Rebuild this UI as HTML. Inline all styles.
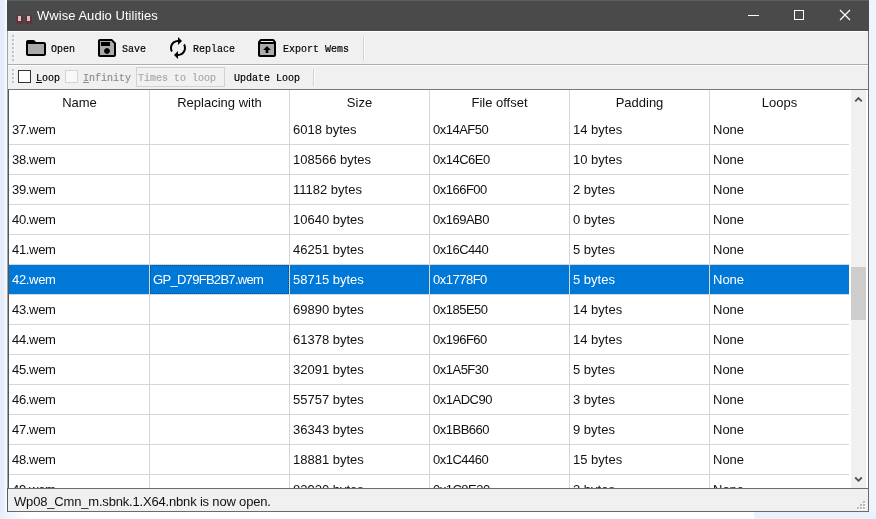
<!DOCTYPE html>
<html>
<head>
<meta charset="utf-8">
<title>Wwise Audio Utilities</title>
<style>
html,body{margin:0;padding:0;}
body{width:876px;height:519px;position:relative;overflow:hidden;background:#ffffff;font-family:"Liberation Sans",sans-serif;}
.abs{position:absolute;}
#deskL{left:0;top:0;width:8px;height:512px;background:linear-gradient(90deg,#e4ecfb 0,#e6eefc 4px,#f2f6fe 5px,#f6f9ff 7px);}
#deskR{left:869px;top:0;width:7px;height:512px;background:#eef3fe;}
#deskBR{left:754px;top:512px;width:122px;height:7px;background:#e8f1fc;}
#deskBL{left:0;top:512px;width:30px;height:7px;background:linear-gradient(90deg,#e4effc 0,#eef4fd 8px,#ffffff 28px);}
#win{will-change:transform;left:7px;top:0;width:862px;height:512px;background:#f0f0f0;}
#title{left:0;top:0;width:862px;height:31px;background:#4a4a4a;border-top:1px solid #5e5e5e;box-sizing:border-box;}
#title .t{left:30px;top:7px;letter-spacing:0.04px;font-size:13px;color:#ffffff;white-space:nowrap;line-height:16px;}
.mono{font-family:"Liberation Mono",monospace;font-size:11.8px;white-space:nowrap;line-height:14px;color:#000;-webkit-text-stroke:0.2px currentColor;transform:scaleX(0.8473);transform-origin:0 0;}
#tb1{left:0;top:31px;width:862px;height:33px;background:#f0f0f0;border-top:1px solid #fff;box-sizing:border-box;}
#sepA{left:0;top:64px;width:862px;height:1px;background:#adadad;}
#sepB{left:0;top:65px;width:862px;height:1px;background:#ffffff;}
#tb2{left:0;top:66px;width:862px;height:23px;background:#f0f0f0;}
.grip{width:2px;background-image:repeating-linear-gradient(180deg,#c2c2c2 0,#c2c2c2 2px,transparent 2px,transparent 4px);border-right:1px solid #fafafa;}
.vsep{width:1px;background:#d2d2d2;border-right:1px solid #fbfbfb;}
.cb{width:13px;height:13px;box-sizing:border-box;border:1px solid #333;background:#fff;}
.cb.dis{border-color:#d4d4d4;background:#f8f8f8;}
#inp{left:129px;top:67px;width:89px;height:20px;box-sizing:border-box;border:1px solid #d2d2d2;background:#f1f1f1;}
#table{left:1px;top:89px;width:860px;height:399px;background:#fff;border-top:1px solid #787878;border-left:1px solid #555;box-sizing:border-box;overflow:hidden;}
.col{top:0;width:1px;height:398px;background:#d6d6d6;}
.row{left:0;width:840px;height:1px;background:#d6d6d6;}
.hd{top:5px;width:139px;text-align:center;font-size:13px;line-height:16px;color:#111;}
.c{font-size:13px;line-height:16px;color:#111;white-space:nowrap;}
#sel{left:0;top:175px;width:840px;height:30px;background:#0078d7;}
#status{left:1px;top:488px;width:860px;height:23px;background:#f0f0f0;border-top:1px solid #6c6c6c;box-sizing:border-box;}
#status .t{left:6px;top:5px;letter-spacing:-0.18px;font-size:13px;line-height:16px;color:#111;white-space:nowrap;}
#sb{left:842px;top:0;width:15px;height:398px;background:#f0f0f0;}
#thumb{left:842px;top:177px;width:15px;height:53px;background:#cdcdcd;}
</style>
</head>
<body>
<div id="deskL" class="abs"></div>
<div id="deskR" class="abs"></div>
<div id="deskBR" class="abs"></div>
<div id="deskBL" class="abs"></div>
<div id="win" class="abs">
  <div id="title" class="abs">
    <svg class="abs" style="left:9px;top:7px" width="16" height="16" viewBox="0 0 16 16"><rect x="0.500" y="7.500" width="6.500" height="8.500" fill="#6a2634" opacity=".6"/><rect x="9.500" y="7.500" width="6.500" height="8.500" fill="#6a2634" opacity=".6"/><rect x="2" y="8" width="3" height="5" fill="#e6bcc0"/><rect x="11" y="8" width="3" height="5" fill="#e6bcc0"/></svg>
    <div class="abs t">Wwise Audio Utilities</div>
    <svg class="abs" style="left:736px;top:-1px" width="126" height="30" viewBox="0 0 126 30">
      <path d="M5 15.500H16" stroke="#fff" stroke-width="1" fill="none"/>
      <rect x="51.500" y="10.500" width="9" height="9" stroke="#fff" stroke-width="1" fill="none"/>
      <path d="M97 10L107 20M107 10L97 20" stroke="#fff" stroke-width="1.200" fill="none"/>
    </svg>
  </div>
  <div id="tb1" class="abs">
    <div class="abs grip" style="left:5px;top:3px;height:26px"></div>
    <svg class="abs" style="left:17px;top:4px" width="24" height="24" viewBox="0 0 24 24">
      <path fill-opacity=".29" d="M4 8h16v10H4z"/>
      <path d="M20 6h-8l-2-2H4c-1.100 0-1.990.9-1.990 2L2 18c0 1.100.9 2 2 2h16c1.100 0 2-.9 2-2V8c0-1.100-.9-2-2-2zm0 12H4V8h16v10z"/>
    </svg>
    <div class="abs mono" style="left:44px;top:10px">Open</div>
    <svg class="abs" style="left:88px;top:4px" width="24" height="24" viewBox="0 0 24 24">
      <path fill-opacity=".29" d="M5 5v14h14V7.830L16.170 5H5zm7 13c-1.660 0-3-1.340-3-3s1.340-3 3-3 3 1.340 3 3-1.340 3-3 3zm3-8H6V6h9v4z"/>
      <path d="M17 3H5c-1.110 0-2 .9-2 2v14c0 1.100.89 2 2 2h14c1.100 0 2-.9 2-2V7l-4-4zm2 16H5V5h11.170L19 7.830V19zm-7-7c-1.660 0-3 1.340-3 3s1.340 3 3 3 3-1.340 3-3-1.340-3-3-3zM6 6h9v4H6z"/>
    </svg>
    <div class="abs mono" style="left:115px;top:10px">Save</div>
    <svg class="abs" style="left:159px;top:4px" width="24" height="24" viewBox="0 0 24 24">
      <path d="M12 6v3l4-4-4-4v3c-4.420 0-8 3.580-8 8 0 1.570.46 3.030 1.240 4.260L6.700 14.800c-.45-.83-.7-1.790-.7-2.800 0-3.310 2.690-6 6-6zm6.760 1.740L17.300 9.200c.44.84.7 1.790.7 2.800 0 3.310-2.690 6-6 6v-3l-4 4 4 4v-3c4.420 0 8-3.580 8-8 0-1.570-.46-3.030-1.240-4.260z"/>
    </svg>
    <div class="abs mono" style="left:186px;top:10px">Replace</div>
    <svg class="abs" style="left:248px;top:4px" width="24" height="24" viewBox="0 0 24 24">
      <path fill-opacity=".29" d="M5 19h14V8H5v11zm7-9l4 4h-2.550v3h-2.910v-3H8l4-4z"/>
      <path d="M20.550 5.220l-1.390-1.680C18.880 3.210 18.470 3 18 3H6c-.47 0-.88.21-1.150.55L3.460 5.220C3.170 5.570 3 6.010 3 6.500V19c0 1.100.89 2 2 2h14c1.100 0 2-.9 2-2V6.500c0-.49-.17-.93-.45-1.280zM6.240 5h11.520l.83 1H5.420l.82-1zM19 19H5V8h14v11zM8 14h2.550v3h2.900v-3H16l-4-4z"/>
    </svg>
    <div class="abs mono" style="left:276px;top:10px">Export Wems</div>
    <div class="abs vsep" style="left:356px;top:5px;height:24px"></div>
  </div>
  <div id="sepA" class="abs"></div>
  <div id="sepB" class="abs"></div>
  <div id="tb2" class="abs">
    <div class="abs grip" style="left:5px;top:3px;height:14px"></div>
    <div class="abs cb" style="left:11px;top:4px"></div>
    <div class="abs mono" style="left:29px;top:5px"><u>L</u>oop</div>
    <div class="abs cb dis" style="left:58px;top:4px"></div>
    <div class="abs mono" style="left:76px;top:5px;color:#8c8c8c"><u>I</u>nfinity</div>
    <div class="abs mono" style="left:227px;top:5px">Update Loop</div>
    <div class="abs vsep" style="left:306px;top:3px;height:17px"></div>
  </div>
  <div id="inp" class="abs"><div class="abs mono" style="left:1px;top:3px;color:#a8a8a8">Times to loop</div></div>
  <div id="table" class="abs">
    <div id="sel" class="abs"></div>
    <div class="abs col" style="left:140px"></div>
    <div class="abs col" style="left:280px"></div>
    <div class="abs col" style="left:420px"></div>
    <div class="abs col" style="left:560px"></div>
    <div class="abs col" style="left:700px"></div>
    <div class="abs hd" style="left:1px">Name</div>
    <div class="abs hd" style="left:141px">Replacing with</div>
    <div class="abs hd" style="left:281px">Size</div>
    <div class="abs hd" style="left:421px">File offset</div>
    <div class="abs hd" style="left:561px">Padding</div>
    <div class="abs hd" style="left:701px">Loops</div>
    <!--ROWS-->
    <div class="abs row" style="top:54px"></div>
    <div class="abs c" style="left:3px;top:32px;letter-spacing:-0.33px">37.wem</div>
    <div class="abs c" style="left:284px;top:32px">6018 bytes</div>
    <div class="abs c" style="left:424px;top:32px;letter-spacing:-0.5px">0x14AF50</div>
    <div class="abs c" style="left:564px;top:32px">14 bytes</div>
    <div class="abs c" style="left:704px;top:32px">None</div>
    <div class="abs row" style="top:84px"></div>
    <div class="abs c" style="left:3px;top:62px;letter-spacing:-0.33px">38.wem</div>
    <div class="abs c" style="left:284px;top:62px">108566 bytes</div>
    <div class="abs c" style="left:424px;top:62px;letter-spacing:-0.5px">0x14C6E0</div>
    <div class="abs c" style="left:564px;top:62px">10 bytes</div>
    <div class="abs c" style="left:704px;top:62px">None</div>
    <div class="abs row" style="top:114px"></div>
    <div class="abs c" style="left:3px;top:92px;letter-spacing:-0.33px">39.wem</div>
    <div class="abs c" style="left:284px;top:92px">11182 bytes</div>
    <div class="abs c" style="left:424px;top:92px;letter-spacing:-0.5px">0x166F00</div>
    <div class="abs c" style="left:564px;top:92px">2 bytes</div>
    <div class="abs c" style="left:704px;top:92px">None</div>
    <div class="abs row" style="top:144px"></div>
    <div class="abs c" style="left:3px;top:122px;letter-spacing:-0.33px">40.wem</div>
    <div class="abs c" style="left:284px;top:122px">10640 bytes</div>
    <div class="abs c" style="left:424px;top:122px;letter-spacing:-0.5px">0x169AB0</div>
    <div class="abs c" style="left:564px;top:122px">0 bytes</div>
    <div class="abs c" style="left:704px;top:122px">None</div>
    <div class="abs row" style="top:174px"></div>
    <div class="abs c" style="left:3px;top:152px;letter-spacing:-0.33px">41.wem</div>
    <div class="abs c" style="left:284px;top:152px">46251 bytes</div>
    <div class="abs c" style="left:424px;top:152px;letter-spacing:-0.5px">0x16C440</div>
    <div class="abs c" style="left:564px;top:152px">5 bytes</div>
    <div class="abs c" style="left:704px;top:152px">None</div>
    <div class="abs row" style="top:204px"></div>
    <div class="abs c" style="left:3px;top:182px;color:#fff;letter-spacing:-0.33px">42.wem</div>
    <div class="abs c" style="left:144px;top:182px;color:#fff;letter-spacing:-0.7px">GP_D79FB2B7.wem</div>
    <div class="abs c" style="left:284px;top:182px;color:#fff">58715 bytes</div>
    <div class="abs c" style="left:424px;top:182px;color:#fff;letter-spacing:-0.5px">0x1778F0</div>
    <div class="abs c" style="left:564px;top:182px;color:#fff">5 bytes</div>
    <div class="abs c" style="left:704px;top:182px;color:#fff">None</div>
    <div class="abs row" style="top:234px"></div>
    <div class="abs c" style="left:3px;top:212px;letter-spacing:-0.33px">43.wem</div>
    <div class="abs c" style="left:284px;top:212px">69890 bytes</div>
    <div class="abs c" style="left:424px;top:212px;letter-spacing:-0.5px">0x185E50</div>
    <div class="abs c" style="left:564px;top:212px">14 bytes</div>
    <div class="abs c" style="left:704px;top:212px">None</div>
    <div class="abs row" style="top:264px"></div>
    <div class="abs c" style="left:3px;top:242px;letter-spacing:-0.33px">44.wem</div>
    <div class="abs c" style="left:284px;top:242px">61378 bytes</div>
    <div class="abs c" style="left:424px;top:242px;letter-spacing:-0.5px">0x196F60</div>
    <div class="abs c" style="left:564px;top:242px">14 bytes</div>
    <div class="abs c" style="left:704px;top:242px">None</div>
    <div class="abs row" style="top:294px"></div>
    <div class="abs c" style="left:3px;top:272px;letter-spacing:-0.33px">45.wem</div>
    <div class="abs c" style="left:284px;top:272px">32091 bytes</div>
    <div class="abs c" style="left:424px;top:272px;letter-spacing:-0.5px">0x1A5F30</div>
    <div class="abs c" style="left:564px;top:272px">5 bytes</div>
    <div class="abs c" style="left:704px;top:272px">None</div>
    <div class="abs row" style="top:324px"></div>
    <div class="abs c" style="left:3px;top:302px;letter-spacing:-0.33px">46.wem</div>
    <div class="abs c" style="left:284px;top:302px">55757 bytes</div>
    <div class="abs c" style="left:424px;top:302px;letter-spacing:-0.5px">0x1ADC90</div>
    <div class="abs c" style="left:564px;top:302px">3 bytes</div>
    <div class="abs c" style="left:704px;top:302px">None</div>
    <div class="abs row" style="top:354px"></div>
    <div class="abs c" style="left:3px;top:332px;letter-spacing:-0.33px">47.wem</div>
    <div class="abs c" style="left:284px;top:332px">36343 bytes</div>
    <div class="abs c" style="left:424px;top:332px;letter-spacing:-0.5px">0x1BB660</div>
    <div class="abs c" style="left:564px;top:332px">9 bytes</div>
    <div class="abs c" style="left:704px;top:332px">None</div>
    <div class="abs row" style="top:384px"></div>
    <div class="abs c" style="left:3px;top:362px;letter-spacing:-0.33px">48.wem</div>
    <div class="abs c" style="left:284px;top:362px">18881 bytes</div>
    <div class="abs c" style="left:424px;top:362px;letter-spacing:-0.5px">0x1C4460</div>
    <div class="abs c" style="left:564px;top:362px">15 bytes</div>
    <div class="abs c" style="left:704px;top:362px">None</div>
    <div class="abs row" style="top:414px"></div>
    <div class="abs c" style="left:3px;top:392px;letter-spacing:-0.33px">49.wem</div>
    <div class="abs c" style="left:284px;top:392px">82920 bytes</div>
    <div class="abs c" style="left:424px;top:392px;letter-spacing:-0.5px">0x1C8E30</div>
    <div class="abs c" style="left:564px;top:392px">3 bytes</div>
    <div class="abs c" style="left:704px;top:392px">None</div>
    <!--ENDROWS-->
    <div class="abs" style="left:141px;top:175px;width:139px;height:29px;box-sizing:border-box;border:1px dotted rgba(0,30,70,.45)"></div>
    <div id="sb" class="abs"></div>
    <div id="thumb" class="abs"></div>
    <svg class="abs" style="left:844px;top:5px" width="11" height="8" viewBox="0 0 11 8"><path d="M2.200 6.300L5.500 3L8.800 6.300" fill="none" stroke="#505050" stroke-width="1.800"/></svg>
    <svg class="abs" style="left:844px;top:385px" width="11" height="8" viewBox="0 0 11 8"><path d="M2.200 2.500L5.500 5.800L8.800 2.500" fill="none" stroke="#505050" stroke-width="1.800"/></svg>
  </div>
  <div id="status" class="abs">
    <div class="abs t">Wp08_Cmn_m.sbnk.1.X64.nbnk is now open.</div>
    <svg class="abs" style="left:848px;top:11px" width="10" height="10" viewBox="0 0 10 10"><g fill="#fff"><rect x="8" y="2" width="2" height="2"/><rect x="5" y="5" width="2" height="2"/><rect x="8" y="5" width="2" height="2"/><rect x="2" y="8" width="2" height="2"/><rect x="5" y="8" width="2" height="2"/><rect x="8" y="8" width="2" height="2"/></g><g fill="#b8b8b8"><rect x="7" y="1" width="2" height="2"/><rect x="4" y="4" width="2" height="2"/><rect x="7" y="4" width="2" height="2"/><rect x="1" y="7" width="2" height="2"/><rect x="4" y="7" width="2" height="2"/><rect x="7" y="7" width="2" height="2"/></g></svg>
  </div>
  <div class="abs" style="left:861px;top:31px;width:1px;height:481px;background:#6a6a6a"></div>
  <div class="abs" style="left:0;top:511px;width:862px;height:1px;background:#6a6a6a"></div>
  <div class="abs" style="left:0;top:31px;width:1px;height:457px;background:#a4a4a4"></div>
  <div class="abs" style="left:0;top:488px;width:1px;height:24px;background:#5a5a5a"></div>
</div>
</body>
</html>
